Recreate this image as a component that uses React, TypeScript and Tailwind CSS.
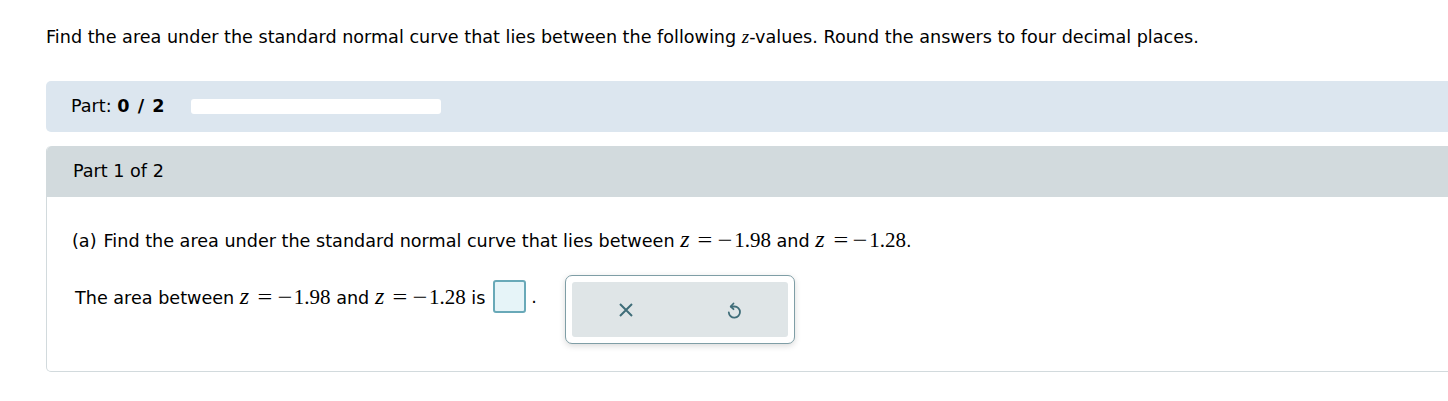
import { ReactNode } from 'react';

const Z = ({ value }: { value: string }) => (
  <span className="font-['Liberation_Serif',serif] text-[21px] whitespace-nowrap">
    <span className="italic text-[24px] leading-[0]">z</span>
    <span className="inline-block ml-[10px] mr-[8px] scale-x-[1.25] leading-[0]">=</span>
    <span className="inline-block mr-[3px] scale-x-[1.25] leading-[0]">−</span>
    <span>{value}</span>
  </span>
);

const ToolButton = ({ children, label }: { children: ReactNode; label: string }) => (
  <button aria-label={label} className="flex-1 h-full flex items-center justify-center text-[#3f6d79]">
    {children}
  </button>
);

export default function App() {
  return (
    <div className="w-full overflow-hidden bg-white text-black font-['DejaVu_Sans',Verdana,sans-serif] text-[17.6px]">
      <div className="pl-[46px] pt-[26px] pb-[28px]">
        <p className="leading-[22px]">
          Find the area under the standard normal curve that lies between the following{' '}
          <span className="font-['Liberation_Serif',serif] italic text-[19px]">z</span>-values. Round the answers to four
          decimal places.
        </p>

        {/* Progress */}
        <div className="mt-[33px] w-[1440px] h-[51px] bg-[#dce6ef] rounded-l-[5px] flex items-center pl-[25px]">
          <span>
            Part: <b className="font-bold tracking-[1px]">0 / 2</b>
          </span>
          <div className="ml-[26px] w-[250px] h-[15px] bg-white rounded-[3px]" />
        </div>

        {/* Part 1 */}
        <div className="mt-[14px] w-[1440px] rounded-[5px] border-x border-b border-[#d2dadd]">
          <div className="h-[51px] bg-[#d2dadd] rounded-t-[5px] flex items-center pl-[26px]">Part 1 of 2</div>
          <div className="h-[174px] pl-[25px] pt-[31px]">
            <p className="flex items-center gap-[7px] leading-[24px]">
              <span>(a)</span>
              <span>
                Find the area under the standard normal curve that lies between <Z value="1.98" /> and{' '}
                <Z value="1.28" />.
              </span>
            </p>

            <div className="mt-[22px] flex items-start">
              <span className="ml-[3px] mt-[10px] leading-[24px]">
                The area between <Z value="1.98" /> and <Z value="1.28" /> is
              </span>
              <div className="ml-[8px] mt-[5px] w-[33px] h-[33px] bg-[#e6f4f8] border-2 border-[#69a9b8] rounded-[3px]" />
              <span className="ml-[5px] mt-[10px] leading-[24px]">.</span>

              <div className="ml-[28px] w-[230px] h-[69px] p-[6px] bg-white border border-[#7f9ea6] rounded-[7px] shadow-[0_2px_6px_rgba(0,0,0,0.15)]">
                <div className="h-full bg-[#dfe5e7] rounded-[3px] flex">
                  <ToolButton label="Clear">
                    <svg width="16" height="16" viewBox="0 0 16 16" fill="none" stroke="currentColor" strokeWidth="2">
                      <path d="M2 2 L14 14 M14 2 L2 14" />
                    </svg>
                  </ToolButton>
                  <ToolButton label="Undo">
                    <svg width="16" height="20" viewBox="0 0 16 20" fill="none" stroke="currentColor" strokeWidth="1.8" strokeLinecap="round" strokeLinejoin="round">
                      <path d="M5 6.5 H8.5 A5.6 5.6 0 1 1 2.8 12.5" />
                      <path d="M7.5 3.5 L4.7 6.5 L7.5 9.2" />
                    </svg>
                  </ToolButton>
                </div>
              </div>
            </div>
          </div>
        </div>
      </div>
    </div>
  );
}
